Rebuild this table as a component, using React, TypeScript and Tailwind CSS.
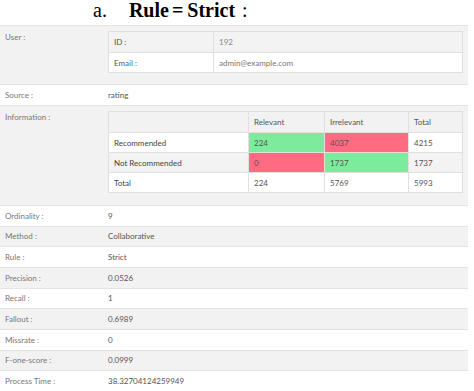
import React from "react";

type Cell = { text: string; tone?: "green" | "red" };

const matrix: { label: string; cells: Cell[] }[] = [
  {
    label: "Recommended",
    cells: [{ text: "224", tone: "green" }, { text: "4037", tone: "red" }, { text: "4215" }],
  },
  {
    label: "Not Recommended",
    cells: [{ text: "0", tone: "red" }, { text: "1737", tone: "green" }, { text: "1737" }],
  },
  { label: "Total", cells: [{ text: "224" }, { text: "5769" }, { text: "5993" }] },
];

const stats: [string, string][] = [
  ["Ordinality :", "9"],
  ["Method :", "Collaborative"],
  ["Rule :", "Strict"],
  ["Precision :", "0.0526"],
  ["Recall :", "1"],
  ["Fallout :", "0.6989"],
  ["Missrate :", "0"],
  ["F-one-score :", "0.0999"],
  ["Process Time :", "38.32704124259949"],
];

function toneClass(tone?: "green" | "red") {
  if (tone === "green") return "bg-[#7deb9c]";
  if (tone === "red") return "bg-[#ff6b81]";
  return "";
}

export default function App() {
  return (
    <div className="w-[474px] h-[391px] overflow-hidden bg-white font-['Lato',sans-serif] text-[8px] text-[#555]">
      <div className="h-[25px] flex items-end pb-[5px] pl-[93px] font-['Liberation_Serif',serif] text-[20px] leading-none text-black">
        <span className="font-normal">a.</span>
        <span className="ml-[22px] font-bold">Rule</span>
        <span className="ml-[3px] font-bold">=</span>
        <span className="ml-[4px] font-bold">Strict</span>
        <span className="ml-[7px]">:</span>
      </div>

      <div className="w-[468px]">
        {/* User */}
        <div className="flex bg-[#f2f2f2] border-t border-[#e4e4e4] pt-[5px] pb-[11px]">
          <div className="w-[108px] pl-[5px] pt-[0px] text-[#777]">User :</div>
          <div className="flex-1 pr-[5px]">
            <div className="border border-[#e0e0e0]">
              <div className="flex h-[20px] items-center bg-[#f3f3f3]">
                <div className="w-[105px] pl-[5px] border-r border-[#e0e0e0] h-full flex items-center">ID :</div>
                <div className="pl-[5px] text-[#888]">192</div>
              </div>
              <div className="flex h-[20px] items-center bg-white border-t border-[#e0e0e0]">
                <div className="w-[105px] pl-[5px] border-r border-[#e0e0e0] h-full flex items-center">
                  Em<span className="text-[#3a6ea5]">ail</span>&nbsp;:
                </div>
                <div className="pl-[5px] text-[#777]">admin@example.com</div>
              </div>
            </div>
          </div>
        </div>

        {/* Source */}
        <div className="flex h-[21px] items-center bg-white border-t border-[#e4e4e4]">
          <div className="w-[108px] pl-[5px] text-[#777]">Source :</div>
          <div>rating</div>
        </div>

        {/* Information */}
        <div className="flex bg-[#f2f2f2] border-t border-[#e4e4e4] pt-[5px] pb-[12px]">
          <div className="w-[108px] pl-[5px] text-[#777]">Information :</div>
          <div className="flex-1 pr-[5px]">
            <div className="border border-[#e0e0e0] bg-white">
              <div className="grid grid-cols-[140px_76px_84px_1fr] h-[20px] bg-[#f2f2f2]">
                <div className="border-r border-[#e0e0e0]" />
                <div className="pl-[5px] flex items-center border-r border-[#e0e0e0]">Relevant</div>
                <div className="pl-[5px] flex items-center border-r border-[#e0e0e0]">Irrelevant</div>
                <div className="pl-[5px] flex items-center">Total</div>
              </div>
              {matrix.map((row, i) => (
                <div
                  key={row.label}
                  className={`grid grid-cols-[140px_76px_84px_1fr] h-[20px] border-t border-[#e0e0e0] ${
                    i === 1 ? "bg-[#f3f3f3]" : "bg-white"
                  }`}
                >
                  <div className="pl-[5px] flex items-center border-r border-[#e0e0e0] text-[#444]">{row.label}</div>
                  {row.cells.map((c, j) => (
                    <div
                      key={j}
                      className={`pl-[5px] flex items-center ${j < 2 ? "border-r border-[#e0e0e0]" : ""} ${toneClass(c.tone)}`}
                    >
                      {c.text}
                    </div>
                  ))}
                </div>
              ))}
            </div>
          </div>
        </div>

        {/* Stats */}
        {stats.map(([label, value], i) => (
          <div
            key={label}
            className={`flex h-[20.67px] items-center border-t border-[#e4e4e4] ${
              i % 2 === 1 ? "bg-[#f2f2f2]" : "bg-white"
            }`}
          >
            <div className="w-[108px] pl-[5px] text-[#777]">{label}</div>
            <div>{value}</div>
          </div>
        ))}
      </div>
    </div>
  );
}
